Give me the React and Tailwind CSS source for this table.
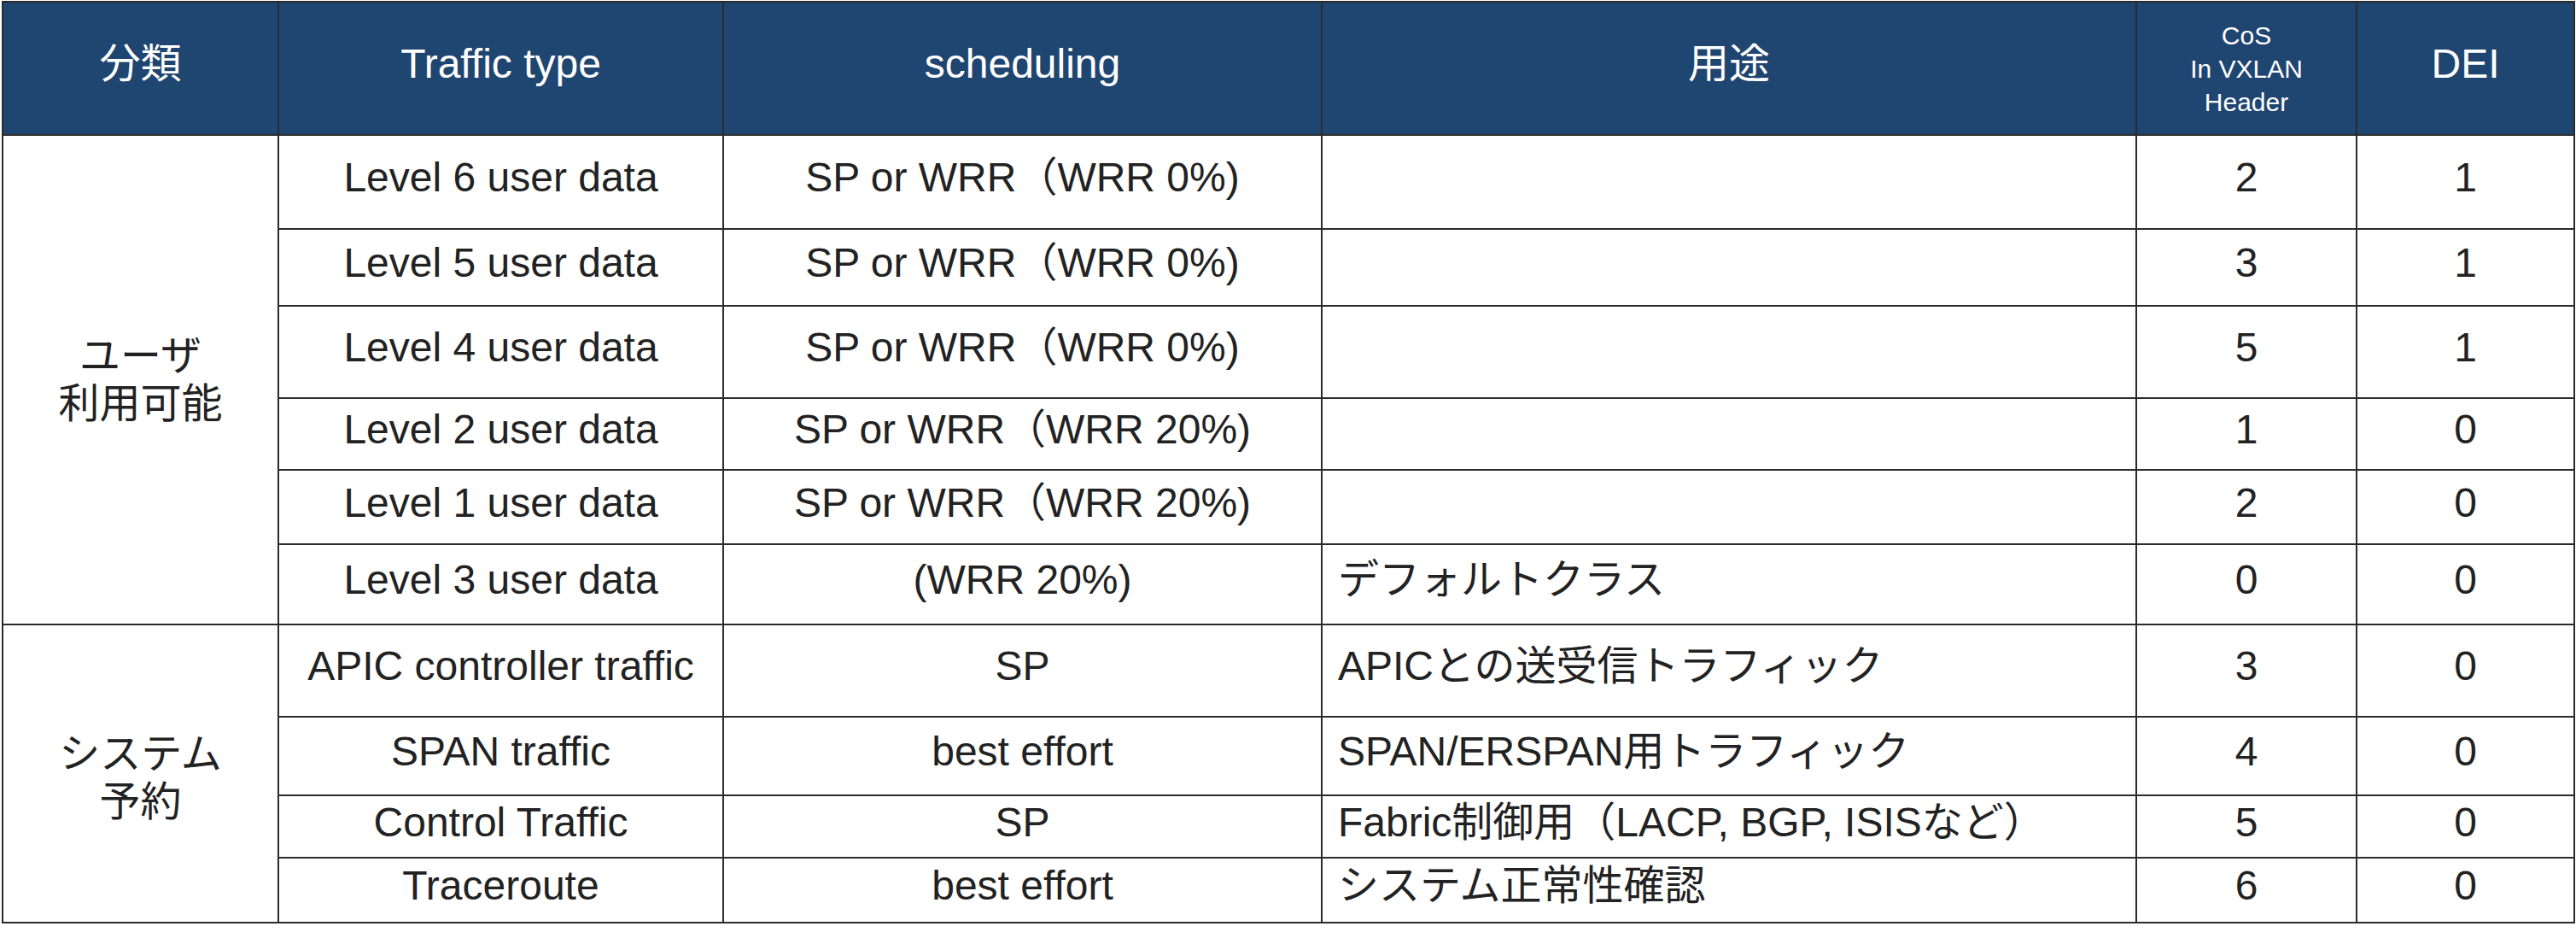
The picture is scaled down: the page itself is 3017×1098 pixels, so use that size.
const rows = [
  { type: 'Level 6 user data', sched: 'SP or WRR（WRR 0%)', use: '', cos: '2', dei: '1', h: 'h-[110px]' },
  { type: 'Level 5 user data', sched: 'SP or WRR（WRR 0%)', use: '', cos: '3', dei: '1', h: 'h-[90px]' },
  { type: 'Level 4 user data', sched: 'SP or WRR（WRR 0%)', use: '', cos: '5', dei: '1', h: 'h-[108px]' },
  { type: 'Level 2 user data', sched: 'SP or WRR（WRR 20%)', use: '', cos: '1', dei: '0', h: 'h-[84px]' },
  { type: 'Level 1 user data', sched: 'SP or WRR（WRR 20%)', use: '', cos: '2', dei: '0', h: 'h-[87px]' },
  { type: 'Level 3 user data', sched: '(WRR 20%)', use: 'デフォルトクラス', cos: '0', dei: '0', h: 'h-[94px]' },
  { type: 'APIC controller traffic', sched: 'SP', use: 'APICとの送受信トラフィック', cos: '3', dei: '0', h: 'h-[108px]' },
  { type: 'SPAN traffic', sched: 'best effort', use: 'SPAN/ERSPAN用トラフィック', cos: '4', dei: '0', h: 'h-[92px]' },
  { type: 'Control Traffic', sched: 'SP', use: 'Fabric制御用（LACP, BGP, ISISなど）', cos: '5', dei: '0', h: 'h-[73px]' },
  { type: 'Traceroute', sched: 'best effort', use: 'システム正常性確認', cos: '6', dei: '0', h: 'h-[76px]' },
];

const cell = 'border-2 border-[#2b2b2b] text-center align-middle pb-[10px] leading-[1.15]';

function App() {
  return (
    <div className="w-[3017px] h-[1098px] bg-white pt-px pl-[2px] text-[#222] font-['Liberation_Sans','Noto_Sans_CJK_JP',sans-serif]">
      <table className="table-fixed border-collapse w-[3012px] text-[48px]">
        <colgroup>
          <col className="w-[323px]" />
          <col className="w-[521px]" />
          <col className="w-[701px]" />
          <col className="w-[954px]" />
          <col className="w-[258px]" />
          <col className="w-[255px]" />
        </colgroup>
        <thead>
          <tr className="h-[156px] bg-[#1f4571] text-white">
            <th className={cell + ' font-normal'}>分類</th>
            <th className={cell + ' font-normal'}>Traffic type</th>
            <th className={cell + ' font-normal'}>scheduling</th>
            <th className={cell + ' font-normal'}>用途</th>
            <th className="border-2 border-[#2b2b2b] text-center align-middle font-normal text-[30px] leading-[39px]">
              CoS<br />In VXLAN<br />Header
            </th>
            <th className={cell + ' font-normal'}>DEI</th>
          </tr>
        </thead>
        <tbody>
          {rows.map((r, i) => (
            <tr key={i} className={r.h}>
              {i === 0 && (
                <td rowSpan={6} className="border-2 border-[#2b2b2b] text-center align-middle leading-[56px]">
                  ユーザ<br />利用可能
                </td>
              )}
              {i === 6 && (
                <td rowSpan={4} className="border-2 border-[#2b2b2b] text-center align-middle leading-[56px] pt-[10px]">
                  システム<br />予約
                </td>
              )}
              <td className={cell}>{r.type}</td>
              <td className={cell}>{r.sched}</td>
              <td className="border-2 border-[#2b2b2b] text-left align-middle pl-[18px] pb-[10px] leading-[1.15]">{r.use}</td>
              <td className={cell}>{r.cos}</td>
              <td className={cell}>{r.dei}</td>
            </tr>
          ))}
        </tbody>
      </table>
    </div>
  );
}

export default App;
